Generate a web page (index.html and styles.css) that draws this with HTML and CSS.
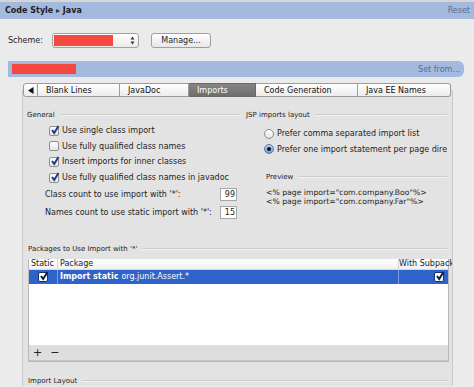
FILE: index.html
```html
<!DOCTYPE html>
<html lang="en">
<head>
    <meta charset="UTF-8">
    <title>Code Style - Java</title>
    <link rel="stylesheet" href="styles.css">
</head>
<body>
    <div class="titlebar">
        <span class="crumbs">Code Style <span class="crumb-arrow">&#9656;</span> Java</span>
        <span class="reset">Reset</span>
    </div>

    <div class="scheme-row">
        <span class="scheme-label">Scheme:</span>
        <div class="select">
            <div class="redacted"></div>
            <svg class="updown" width="5" height="9" viewBox="0 0 5 9"><path d="M2.5 0.5 L4.5 3.5 L0.5 3.5 Z M2.5 8.5 L4.5 5.5 L0.5 5.5 Z" fill="#333"/></svg>
        </div>
        <div class="btn">Manage...</div>
    </div>

    <div class="bluebar">
        <div class="redacted redacted-bar"></div>
        <span class="set-from">Set from...</span>
    </div>

    <div class="tabs">
        <div class="tab tab-arrow"><svg width="6" height="7" viewBox="0 0 6 7"><path d="M5.5 0 L5.5 7 L0 3.5 Z" fill="#111"/></svg></div>
        <div class="tab tab-blank">Blank Lines</div>
        <div class="tab tab-javadoc">JavaDoc</div>
        <div class="tab tab-imports active">Imports</div>
        <div class="tab tab-codegen">Code Generation</div>
        <div class="tab tab-javaee">Java EE Names</div>
    </div>

    <div class="panel">
        <div class="columns">
            <div class="col">
                <div class="section-title"><span>General</span></div>
                <div class="check-row first"><span class="cb checked"><svg width="10" height="10" viewBox="0 0 10 10"><path d="M2 5 L4.2 8 L8.5 1" fill="none" stroke="#1c3b86" stroke-width="2"/></svg></span>Use single class import</div>
                <div class="check-row"><span class="cb"></span>Use fully qualified class names</div>
                <div class="check-row"><span class="cb checked"><svg width="10" height="10" viewBox="0 0 10 10"><path d="M2 5 L4.2 8 L8.5 1" fill="none" stroke="#1c3b86" stroke-width="2"/></svg></span>Insert imports for inner classes</div>
                <div class="check-row"><span class="cb checked"><svg width="10" height="10" viewBox="0 0 10 10"><path d="M2 5 L4.2 8 L8.5 1" fill="none" stroke="#1c3b86" stroke-width="2"/></svg></span>Use fully qualified class names in javadoc</div>
                <div class="count-row first"><span class="count-label">Class count to use import with '*':</span><span class="num">99</span></div>
                <div class="count-row second"><span class="count-label">Names count to use static import with '*':</span><span class="num">15</span></div>
            </div>
            <div class="col">
                <div class="section-title"><span>JSP imports layout</span></div>
                <div class="radio-row first"><span class="radio"></span>Prefer comma separated import list</div>
                <div class="radio-row"><span class="radio selected"></span>Prefer one import statement per page dire</div>
                <div class="section-title preview-title"><span>Preview</span></div>
                <div class="preview">
                    <div>&lt;% page import="com.company.Boo"%&gt;</div>
                    <div>&lt;% page import="com.company.Far"%&gt;</div>
                </div>
            </div>
        </div>

        <div class="section-title packages-title"><span>Packages to Use Import with '*'</span></div>
        <div class="table">
            <div class="thead">
                <div class="c-static">Static</div>
                <div class="c-package">Package</div>
                <div class="c-sub">With Subpack</div>
            </div>
            <div class="trow selected">
                <div class="c-static"><span class="cb checked small"><svg width="10" height="10" viewBox="0 0 10 10"><path d="M2 5 L4.2 8 L8.5 1" fill="none" stroke="#0b1c4a" stroke-width="2"/></svg></span></div>
                <div class="c-package"><b>Import static</b> org.junit.Assert.*</div>
                <div class="c-sub"><span class="cb checked small"><svg width="10" height="10" viewBox="0 0 10 10"><path d="M2 5 L4.2 8 L8.5 1" fill="none" stroke="#0b1c4a" stroke-width="2"/></svg></span></div>
            </div>
            <div class="tbody-empty"></div>
            <div class="toolbar">
                <span class="tool">+</span>
                <span class="tool">&minus;</span>
            </div>
        </div>

        <div class="section-title layout-title"><span>Import Layout</span></div>
    </div>
</body>
</html>
```

FILE: styles.css
```css
body {
    margin: 0;
    width: 474px;
    height: 387px;
    overflow: hidden;
    background-color: #ebebeb;
    font-family: "DejaVu Sans", sans-serif;
    font-size: 8px;
    color: #1d1d1d;
}

/* Breadcrumb header */
.titlebar {
    height: 17px;
    border-top: 2px solid #d6d6d6;
    background-color: #a4b9de;
    display: flex;
    align-items: center;
    justify-content: space-between;
    padding: 0 4px 0 5px;
}

.crumbs {
    font-weight: bold;
    color: #1e1e1e;
}

.crumb-arrow {
    font-weight: normal;
    color: #333;
}

.reset {
    color: #5a6d93;
}

/* Scheme selector */
.scheme-row {
    display: flex;
    align-items: center;
    height: 15px;
    margin-top: 14px;
    padding-left: 8px;
}

.scheme-label {
    width: 44px;
}

.select {
    width: 80px;
    height: 13px;
    border: 1px solid #a2a2a2;
    border-radius: 3px;
    background: linear-gradient(#ffffff, #eaeaea);
    display: flex;
    align-items: center;
    justify-content: space-between;
    padding: 0 4px 0 1px;
}

.select .updown {
    margin-right: -1px;
}

.redacted {
    width: 59px;
    height: 11px;
    background-color: #f4493e;
}

.btn {
    margin-left: 12px;
    width: 58px;
    height: 13px;
    border: 1px solid #9f9f9f;
    border-radius: 3px;
    background: linear-gradient(#ffffff, #e8e8e8);
    display: flex;
    align-items: center;
    justify-content: center;
}

.bluebar {
    margin: 13px 0 0 8px;
    width: 456px;
    height: 16px;
    box-sizing: border-box;
    background-color: #a4b9de;
    border-radius: 0 6px 6px 0;
    display: flex;
    align-items: center;
    justify-content: space-between;
    padding: 0 4px;
}

.redacted-bar {
    width: 64px;
    height: 10px;
}

.set-from {
    color: #5a6d93;
}

/* Segmented tabs */
.tabs {
    display: flex;
    margin: 6px 0 -7px 23px;
    width: 428px;
    height: 14px;
    position: relative;
    z-index: 1;
}

.tab {
    box-sizing: border-box;
    height: 14px;
    display: flex;
    align-items: center;
    padding-left: 8px;
    border: 1px solid #9c9c9c;
    border-left: none;
    background: linear-gradient(#ffffff, #ececec);
    color: #111;
}

.tab-arrow {
    width: 15px;
    padding-left: 4px;
    border-left: 1px solid #9c9c9c;
    border-radius: 3px 0 0 3px;
}

.tab-blank { width: 82px; }
.tab-javadoc { width: 69px; }
.tab-imports { width: 67px; }
.tab-codegen { width: 102px; }
.tab-javaee { width: 93px; border-radius: 0 3px 3px 0; }

.tab.active {
    background: linear-gradient(#858585, #6e6e6e);
    border-color: #6a6a6a;
    color: #fff;
}

/* Tab content */
.panel {
    margin-left: 22px;
    width: 420px;
    height: 276px;
    overflow: hidden;
    border: 1px solid #c8c8c8;
    border-bottom: none;
    background-color: #e3e3e3;
    padding: 19px 5px 0 4px;
}

.columns {
    display: grid;
    grid-template-columns: 213px 201px;
    column-gap: 6px;
}

.section-title {
    display: flex;
    align-items: center;
    height: 10px;
    font-size: 7px;
    color: #222;
}

.section-title::after {
    content: "";
    flex: 1;
    height: 1px;
    margin-left: 5px;
    background-color: #cdcdcd;
    border-bottom: 1px solid #f2f2f2;
}

.check-row {
    display: flex;
    align-items: center;
    height: 15.6px;
    padding-left: 22px;
}

.check-row.first {
    margin-top: 3px;
}

.cb {
    box-sizing: border-box;
    width: 10px;
    height: 10px;
    margin-right: 3px;
    border: 1px solid #8f8f8f;
    border-radius: 2px;
    background: linear-gradient(#ffffff, #e6e6e6);
    display: flex;
    align-items: center;
    justify-content: center;
}

.cb svg {
    margin: -2px -1px 0 0;
    flex-shrink: 0;
}

.count-row {
    display: flex;
    align-items: center;
    justify-content: space-between;
    height: 17px;
    padding: 0 3px 0 18px;
}

.count-row.first {
    margin-top: 1px;
}

.count-row.second {
    height: 19px;
}

.num {
    box-sizing: border-box;
    width: 17px;
    height: 13px;
    background-color: #fff;
    border: 1px solid #a6a6a6;
    display: flex;
    align-items: center;
    justify-content: flex-end;
    padding-right: 1px;
    overflow: hidden;
}

.radio-row {
    display: flex;
    align-items: center;
    height: 15.5px;
    padding-left: 18px;
    white-space: nowrap;
}

.radio-row.first {
    margin-top: 6px;
}

.radio {
    box-sizing: border-box;
    flex-shrink: 0;
    width: 10px;
    height: 10px;
    margin-right: 3px;
    border: 1px solid #8c8c8c;
    border-radius: 50%;
    background: linear-gradient(#ffffff, #e4e4e4);
    display: flex;
    align-items: center;
    justify-content: center;
}

.radio.selected {
    background: linear-gradient(#bcd3f3, #6f9be0);
    border-color: #5a77a8;
}

.radio.selected::after {
    content: "";
    width: 4px;
    height: 4px;
    border-radius: 50%;
    background-color: #111;
}

.preview-title {
    margin: 15px 0 0 20px;
}

.preview {
    margin: 7px 0 0 20px;
    line-height: 8.5px;
    font-size: 7.7px;
    white-space: nowrap;
}

.packages-title {
    margin: 22px 0 0 1px;
}

/* Package table */
.table {
    margin: 5px 0 0 1px;
    width: 419px;
    border: 1px solid #b9b9b9;
    border-top: none;
    background-color: #fff;
}

.thead,
.trow {
    display: grid;
    grid-template-columns: 29px 1fr 49px;
}

.thead {
    height: 10px;
    line-height: 10px;
    background: linear-gradient(#ffffff, #f1f1f1);
    border-bottom: 1px solid #d8d8d8;
    color: #222;
}

.thead > div {
    padding-left: 2px;
    border-right: 1px solid #d6d6d6;
    white-space: nowrap;
}

.thead > .c-sub {
    border-right: none;
    padding: 0 1px 0 0;
    text-align: right;
}

.trow {
    height: 14px;
    line-height: 14px;
}

.trow.selected {
    background-color: #2e63c9;
    color: #fff;
}

.trow > div {
    border-right: 1px solid #7b9ee0;
    padding-left: 2px;
    display: flex;
    align-items: center;
}

.trow > .c-sub {
    border-right: none;
    justify-content: flex-end;
    padding-right: 4px;
}

.trow > .c-static {
    justify-content: center;
    padding-left: 0;
}

.trow b {
    margin-right: 3px;
}

.cb.small {
    margin-right: 0;
    border-color: #1a2f66;
    background: #fff;
}

.tbody-empty {
    height: 61px;
}

.toolbar {
    height: 15px;
    background-color: #dedede;
    border-bottom: 1px solid #c4c4c4;
    display: flex;
    align-items: center;
    padding-left: 4px;
    gap: 8px;
    font-size: 11px;
    color: #222;
}

.layout-title {
    margin: 14px 0 0 1px;
}
```
